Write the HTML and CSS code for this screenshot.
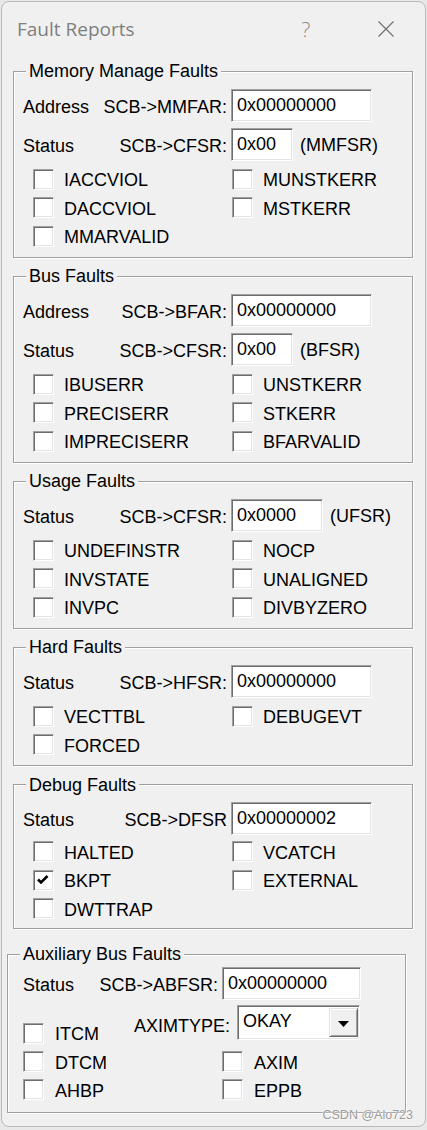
FILE: index.html
```html
<!DOCTYPE html>
<html lang="en">
<head>
<meta charset="utf-8">
<title>Fault Reports</title>
<link rel="stylesheet" href="styles.css">
</head>
<body>
<div class="window">
  <div class="titlebar">
    <span class="title">Fault Reports</span>
    <span class="tb-help">?</span>
    <span class="tb-close"><svg width="16" height="16" viewBox="0 0 16 16"><path d="M0.5 0.5 L15.5 15.5 M15.5 0.5 L0.5 15.5" stroke="#6e6e6e" stroke-width="1.1" fill="none"/></svg></span>
  </div>

  <fieldset class="group">
    <legend>Memory Manage Faults</legend>
    <div class="field">
      <div class="field-label"><span>Address</span><span>SCB-&gt;MMFAR:</span></div>
      <span class="edit edit-long">0x00000000</span>
    </div>
    <div class="field">
      <div class="field-label"><span>Status</span><span>SCB-&gt;CFSR:</span></div>
      <span class="edit edit-short">0x00</span>
      <span class="suffix">(MMFSR)</span>
    </div>
    <div class="checks">
      <div class="check"><span class="box"></span><span class="check-text">IACCVIOL</span></div>
      <div class="check"><span class="box"></span><span class="check-text">MUNSTKERR</span></div>
      <div class="check"><span class="box"></span><span class="check-text">DACCVIOL</span></div>
      <div class="check"><span class="box"></span><span class="check-text">MSTKERR</span></div>
      <div class="check"><span class="box"></span><span class="check-text">MMARVALID</span></div>
    </div>
  </fieldset>

  <fieldset class="group">
    <legend>Bus Faults</legend>
    <div class="field">
      <div class="field-label"><span>Address</span><span>SCB-&gt;BFAR:</span></div>
      <span class="edit edit-long">0x00000000</span>
    </div>
    <div class="field">
      <div class="field-label"><span>Status</span><span>SCB-&gt;CFSR:</span></div>
      <span class="edit edit-short">0x00</span>
      <span class="suffix">(BFSR)</span>
    </div>
    <div class="checks">
      <div class="check"><span class="box"></span><span class="check-text">IBUSERR</span></div>
      <div class="check"><span class="box"></span><span class="check-text">UNSTKERR</span></div>
      <div class="check"><span class="box"></span><span class="check-text">PRECISERR</span></div>
      <div class="check"><span class="box"></span><span class="check-text">STKERR</span></div>
      <div class="check"><span class="box"></span><span class="check-text">IMPRECISERR</span></div>
      <div class="check"><span class="box"></span><span class="check-text">BFARVALID</span></div>
    </div>
  </fieldset>

  <fieldset class="group">
    <legend>Usage Faults</legend>
    <div class="field">
      <div class="field-label"><span>Status</span><span>SCB-&gt;CFSR:</span></div>
      <span class="edit edit-mid">0x0000</span>
      <span class="suffix">(UFSR)</span>
    </div>
    <div class="checks">
      <div class="check"><span class="box"></span><span class="check-text">UNDEFINSTR</span></div>
      <div class="check"><span class="box"></span><span class="check-text">NOCP</span></div>
      <div class="check"><span class="box"></span><span class="check-text">INVSTATE</span></div>
      <div class="check"><span class="box"></span><span class="check-text">UNALIGNED</span></div>
      <div class="check"><span class="box"></span><span class="check-text">INVPC</span></div>
      <div class="check"><span class="box"></span><span class="check-text">DIVBYZERO</span></div>
    </div>
  </fieldset>

  <fieldset class="group">
    <legend>Hard Faults</legend>
    <div class="field">
      <div class="field-label"><span>Status</span><span>SCB-&gt;HFSR:</span></div>
      <span class="edit edit-long">0x00000000</span>
    </div>
    <div class="checks">
      <div class="check"><span class="box"></span><span class="check-text">VECTTBL</span></div>
      <div class="check"><span class="box"></span><span class="check-text">DEBUGEVT</span></div>
      <div class="check"><span class="box"></span><span class="check-text">FORCED</span></div>
    </div>
  </fieldset>

  <fieldset class="group group-debug">
    <legend>Debug Faults</legend>
    <div class="field">
      <div class="field-label"><span>Status</span><span>SCB-&gt;DFSR</span></div>
      <span class="edit edit-long">0x00000002</span>
    </div>
    <div class="checks">
      <div class="check"><span class="box"></span><span class="check-text">HALTED</span></div>
      <div class="check"><span class="box"></span><span class="check-text">VCATCH</span></div>
      <div class="check"><span class="box"><svg width="19" height="19" viewBox="0 0 19 19"><path d="M4 8.5 L7 11.5 L13.5 5" stroke="#000" stroke-width="2.6" fill="none"/></svg></span><span class="check-text">BKPT</span></div>
      <div class="check"><span class="box"></span><span class="check-text">EXTERNAL</span></div>
      <div class="check"><span class="box"></span><span class="check-text">DWTTRAP</span></div>
    </div>
  </fieldset>

  <fieldset class="group group-aux">
    <legend>Auxiliary Bus Faults</legend>
    <div class="field">
      <div class="field-label field-label-aux"><span>Status</span><span>SCB-&gt;ABFSR:</span></div>
      <span class="edit edit-aux">0x00000000</span>
    </div>
    <div class="axim-row">
      <div class="check check-itcm"><span class="box"></span><span class="check-text">ITCM</span></div>
      <span class="axim-label">AXIMTYPE:</span>
      <div class="combo">
        <span class="combo-text">OKAY</span>
        <span class="combo-btn"><svg width="11" height="6" viewBox="0 0 11 6"><path d="M0 0 H11 L5.5 6 Z" fill="#000"/></svg></span>
      </div>
    </div>
    <div class="checks checks-aux">
      <div class="check"><span class="box"></span><span class="check-text">DTCM</span></div>
      <div class="check"><span class="box"></span><span class="check-text">AXIM</span></div>
      <div class="check"><span class="box"></span><span class="check-text">AHBP</span></div>
      <div class="check"><span class="box"></span><span class="check-text">EPPB</span></div>
    </div>
  </fieldset>

  <span class="watermark">CSDN @Alo723</span>
</div>
</body>
</html>
```
FILE: styles.css
```css
html, body {
  margin: 0;
  padding: 0;
}

body {
  background: #e8e8e8;
  font-family: "Liberation Sans", Arial, sans-serif;
  font-size: 18px;
  color: #000;
}

.window {
  position: relative;
  box-sizing: border-box;
  width: 425px;
  margin: 1px 0 0 1px;
  border: 1px solid #bababa;
  border-radius: 8px;
  background: #f0f0f0;
  overflow: hidden;
}

/* ---------- title bar ---------- */
.titlebar {
  display: flex;
  align-items: center;
  height: 53px;
  padding-left: 15px;
}

.title {
  font-family: "Open Sans", "Noto Sans", sans-serif;
  font-size: 19px;
  color: #7f7f7f;
}

.tb-help {
  margin-left: auto;
  width: 30px;
  text-align: center;
  font-family: "Open Sans", "Noto Sans", sans-serif;
  font-weight: 300;
  font-size: 21px;
  color: #8a8a8a;
}

.tb-close {
  display: flex;
  align-items: center;
  justify-content: center;
  width: 30px;
  margin-left: 50px;
  margin-right: 24px;
}

/* ---------- group boxes ---------- */
.group {
  min-width: 0;
  margin: 0 12px 8.5px 11px;
  padding: 8px 0 6px 9px;
  border: 1px solid #a0a0a0;
  box-shadow: inset 1px 1px 0 #fff, 1px 1px 0 #fff;
}

.window > .group:first-of-type {
  margin-top: 6px;
}

.group legend {
  margin-left: 3px;
  padding: 0 3px;
  line-height: 20px;
  font-size: 18px;
  background: #f0f0f0;
}

.group-debug {
  padding-top: 7px;
  padding-bottom: 5px;
}

.group-debug .checks {
  margin-top: 3px;
}

.group-aux {
  margin: 15px 19px 13px 5px;
  padding: 3px 0 8px 15px;
}

.group-aux legend {
  margin-left: -3px;
}

/* ---------- field rows ---------- */
.field {
  display: flex;
  align-items: center;
  height: 33px;
}

.field + .field {
  margin-top: 6px;
}

.field-label {
  display: flex;
  justify-content: space-between;
  box-sizing: border-box;
  width: 208px;
  padding: 4px 4px 0 0;
}

.field-label-aux {
  width: 199px;
}

.edit {
  display: flex;
  align-items: center;
  box-sizing: border-box;
  height: 33px;
  padding-left: 5px;
  background: #fff;
  border: 1px solid;
  border-color: #a0a0a0 #fff #fff #a0a0a0;
  box-shadow: inset 1px 1px 0 #6d6d6d, inset -1px -1px 0 #e3e3e3;
}

.edit-long { width: 141px; }
.edit-short { width: 62px; }
.edit-mid { width: 92px; }
.edit-aux { width: 139px; }

.suffix {
  margin-left: 7px;
  padding-top: 2px;
}

/* ---------- check boxes ---------- */
.checks {
  display: grid;
  grid-template-columns: 199px auto;
  grid-auto-rows: 28.5px;
  margin-top: 4px;
  padding-left: 10px;
}

.check {
  display: flex;
  align-items: center;
  gap: 10px;
}

.check-text {
  padding-top: 3px;
}

.box {
  display: flex;
  align-items: center;
  justify-content: center;
  box-sizing: border-box;
  width: 21px;
  height: 21px;
  background: #fff;
  border: 1px solid;
  border-color: #a0a0a0 #fff #fff #a0a0a0;
  box-shadow: inset 1px 1px 0 #6d6d6d, inset -1px -1px 0 #e3e3e3;
}

/* ---------- auxiliary group ---------- */
.axim-row {
  display: flex;
  align-items: flex-start;
  margin-top: 5px;
}

.check-itcm {
  width: 108px;
  height: 28.5px;
  margin-top: 14px;
  gap: 11px;
}

.axim-label {
  box-sizing: border-box;
  width: 106px;
  padding: 4px 7px 0 0;
  line-height: 35px;
  text-align: right;
}

.combo {
  display: flex;
  box-sizing: border-box;
  width: 123px;
  height: 35px;
  background: #fff;
  border: 1px solid;
  border-color: #a0a0a0 #fff #fff #a0a0a0;
  box-shadow: inset 1px 1px 0 #6d6d6d, inset -1px -1px 0 #e3e3e3;
}

.combo-text {
  flex: 1;
  padding: 0 0 0 5px;
  line-height: 31px;
}

.combo-btn {
  display: flex;
  align-items: center;
  justify-content: center;
  box-sizing: border-box;
  width: 29px;
  margin: 2px 1px 2px 0;
  padding-top: 2px;
  background: #f0f0f0;
  border: 1px solid;
  border-color: #e3e3e3 #6d6d6d #6d6d6d #e3e3e3;
  box-shadow: inset 1px 1px 0 #fff, inset -1px -1px 0 #a0a0a0;
}

.checks-aux {
  grid-auto-rows: 28px;
  margin-top: 0;
  padding-left: 0;
}

.checks-aux .check {
  gap: 11px;
}

/* ---------- watermark ---------- */
.watermark {
  position: absolute;
  right: 12px;
  bottom: 4px;
  font-size: 12.5px;
  line-height: 13px;
  color: #9a9a9a;
  text-shadow: 0 0 1px #fff, 0 0 2px #fff;
}
```
